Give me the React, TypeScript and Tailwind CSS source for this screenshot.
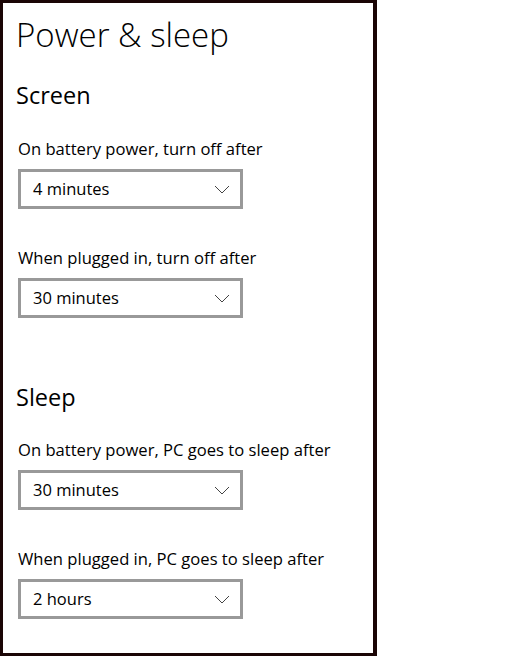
const font = { fontFamily: '"Open Sans", "Noto Sans", sans-serif' };

function Dropdown({ value }: { value: string }) {
	return (
		<div className="ml-[2px] flex h-[40px] w-[225px] items-center justify-between border-[3px] border-[#999999] bg-white pl-[12px] pr-[10px]">
			<span className="text-[16.5px] leading-[22px] text-black">{value}</span>
			<svg width="16" height="9" viewBox="0 0 16 9" fill="none">
				<path d="M1 1 L8 8 L15 1" stroke="#444444" strokeWidth="1" />
			</svg>
		</div>
	);
}

function Setting({ label, value, gap }: { label: string; value: string; gap: string }) {
	return (
		<div className={gap}>
			<div className="pl-[2px] text-[16.6px] leading-[22px] text-black">{label}</div>
			<div className="mt-[9px]">
				<Dropdown value={value} />
			</div>
		</div>
	);
}

export default function App() {
	return (
		<div className="min-h-screen bg-white" style={font}>
			<div className="h-[656px] w-[377px] border-[3px] border-r-4 border-[#1a0505] bg-white pl-[13px] pt-[12px]">
				{/* Header */}
				<h1 className="text-[33px] font-light leading-[40px] text-black">Power &amp; sleep</h1>

				{/* Screen */}
				<h2 className="mt-[24px] text-[23.5px] leading-[32px] text-black">Screen</h2>
				<Setting gap="mt-[27px]" label="On battery power, turn off after" value="4 minutes" />
				<Setting gap="mt-[38px]" label="When plugged in, turn off after" value="30 minutes" />

				{/* Sleep */}
				<h2 className="mt-[63px] text-[23.5px] leading-[32px] text-black">Sleep</h2>
				<Setting gap="mt-[26px]" label="On battery power, PC goes to sleep after" value="30 minutes" />
				<Setting gap="mt-[38px]" label="When plugged in, PC goes to sleep after" value="2 hours" />
			</div>
		</div>
	);
}
